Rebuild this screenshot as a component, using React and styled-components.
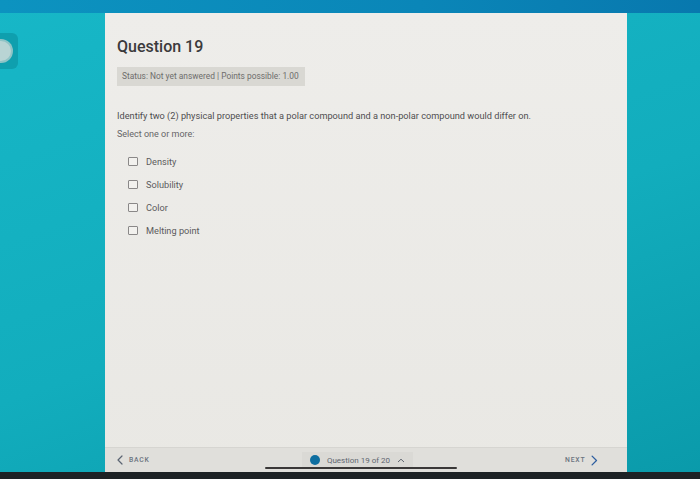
import React from "react";
import styled, { createGlobalStyle } from "styled-components";

const Global = createGlobalStyle`
  html, body { margin: 0; padding: 0; }
  body { font-family: Roboto, "Liberation Sans", sans-serif; }
  #root { width: 700px; height: 479px; overflow: hidden; }
`;

const Page = styled.div`
  width: 700px;
  height: 479px;
  display: flex;
  flex-direction: column;
  background: linear-gradient(160deg, #17b7c7 0%, #12adbd 55%, #0a9aaa 100%);
`;

const TopBar = styled.div`
  height: 13px;
  flex: none;
  background: linear-gradient(90deg, #0c93c0 0%, #0a86b8 60%, #0878ae 100%);
`;

const Main = styled.div`
  flex: 1;
  display: flex;
  min-height: 0;
`;

const Gutter = styled.div`
  width: 105px;
  flex: none;
  padding-top: 20px;
`;

const SideTab = styled.div`
  width: 18px;
  height: 36px;
  border-radius: 0 6px 6px 0;
  background: #0f9fae;
  display: flex;
  align-items: center;
`;

const SideDot = styled.div`
  width: 11px;
  height: 20px;
  border-radius: 0 10px 10px 0;
  background: #b9d4d4;
  box-shadow: 0 0 0 2px #8fc4c6;
`;

const Card = styled.div`
  width: 522px;
  flex: none;
  background: linear-gradient(180deg, #eeedea 0%, #e9e8e4 100%);
  display: flex;
  flex-direction: column;
`;

const Content = styled.div`
  flex: 1;
  padding: 25px 12px 0 12px;
  display: flex;
  flex-direction: column;
`;

const Title = styled.h1`
  margin: 0;
  font-size: 16px;
  font-weight: 500;
  color: #3b3a3c;
  line-height: 18px;
`;

const Status = styled.div`
  margin-top: 11px;
  align-self: flex-start;
  width: 188px;
  height: 19px;
  box-sizing: border-box;
  padding: 0 5px;
  background: #d9d8d3;
  color: #6e6d6c;
  font-size: 8.4px;
  line-height: 19px;
  white-space: nowrap;
  overflow: hidden;
`;

const Prompt = styled.p`
  margin: 24px 0 0 0;
  font-size: 9.2px;
  color: #4f4e50;
  line-height: 11px;
  white-space: nowrap;
`;

const Hint = styled(Prompt)`
  margin-top: 8px;
  font-size: 9px;
  color: #666567;
`;

const Options = styled.div`
  margin-top: 16px;
  padding-left: 11px;
  display: flex;
  flex-direction: column;
  gap: 12px;
`;

const Option = styled.label`
  display: flex;
  align-items: center;
  gap: 8px;
  font-size: 9.2px;
  color: #5c5b5d;
  height: 11px;
`;

const Box = styled.span`
  width: 8px;
  height: 7.5px;
  border: 1.4px solid #8a8888;
  border-radius: 1px;
  background: #f2f1ee;
`;

const Footer = styled.div`
  height: 24px;
  flex: none;
  background: #e0dfdb;
  border-top: 1px solid #d6d5d1;
  display: grid;
  grid-template-columns: 1fr auto 1fr;
  align-items: center;
  padding: 0 29px 0 12px;
  position: relative;
`;

const NavBtn = styled.div`
  display: flex;
  align-items: center;
  gap: 6px;
  font-size: 6.8px;
  letter-spacing: 0.8px;
  font-weight: 500;
  color: #6b7480;
  justify-self: ${(p) => (p.$end ? "end" : "start")};
`;

const Center = styled.div`
  display: flex;
  align-items: center;
  gap: 7px;
  font-size: 8px;
  color: #5f6670;
  padding: 3px 8px;
  background: #dad9d5;
`;

const Dot = styled.span`
  width: 10px;
  height: 10px;
  border-radius: 50%;
  background: #0e6ea0;
`;

const HomeBar = styled.div`
  position: absolute;
  left: 160px;
  bottom: 3px;
  width: 192px;
  height: 2px;
  background: #3a3838;
  border-radius: 1px;
`;

const Right = styled.div`
  flex: 1;
`;

const BottomStrip = styled.div`
  height: 7px;
  flex: none;
  background: #1d2225;
`;

const Chevron = ({ dir, size = 10, color = "#5a6472" }) => (
  <svg width={size * 0.6} height={size} viewBox="0 0 6 10">
    <path
      d={dir === "left" ? "M5 1 L1 5 L5 9" : "M1 1 L5 5 L1 9"}
      fill="none"
      stroke={color}
      strokeWidth="1.2"
      strokeLinecap="round"
      strokeLinejoin="round"
    />
  </svg>
);

const options = ["Density", "Solubility", "Color", "Melting point"];

export default function App() {
  return (
    <>
      <Global />
      <Page>
        <TopBar />
        <Main>
          <Gutter>
            <SideTab>
              <SideDot />
            </SideTab>
          </Gutter>
          <Card>
            <Content>
              <Title>Question 19</Title>
              <Status>Status: Not yet answered | Points possible: 1.00</Status>
              <Prompt>
                Identify two (2) physical properties that a polar compound and a non-polar compound would differ on.
              </Prompt>
              <Hint>Select one or more:</Hint>
              <Options>
                {options.map((o) => (
                  <Option key={o}>
                    <Box />
                    {o}
                  </Option>
                ))}
              </Options>
            </Content>
            <Footer>
              <NavBtn>
                <Chevron dir="left" />
                BACK
              </NavBtn>
              <Center>
                <Dot />
                Question 19 of 20
                <svg width="8" height="5" viewBox="0 0 8 5">
                  <path d="M1 4 L4 1.2 L7 4" fill="none" stroke="#5f6670" strokeWidth="1" />
                </svg>
              </Center>
              <NavBtn $end>
                NEXT
                <Chevron dir="right" size={11} color="#2e5fa0" />
              </NavBtn>
              <HomeBar />
            </Footer>
          </Card>
          <Right />
        </Main>
        <BottomStrip />
      </Page>
    </>
  );
}
